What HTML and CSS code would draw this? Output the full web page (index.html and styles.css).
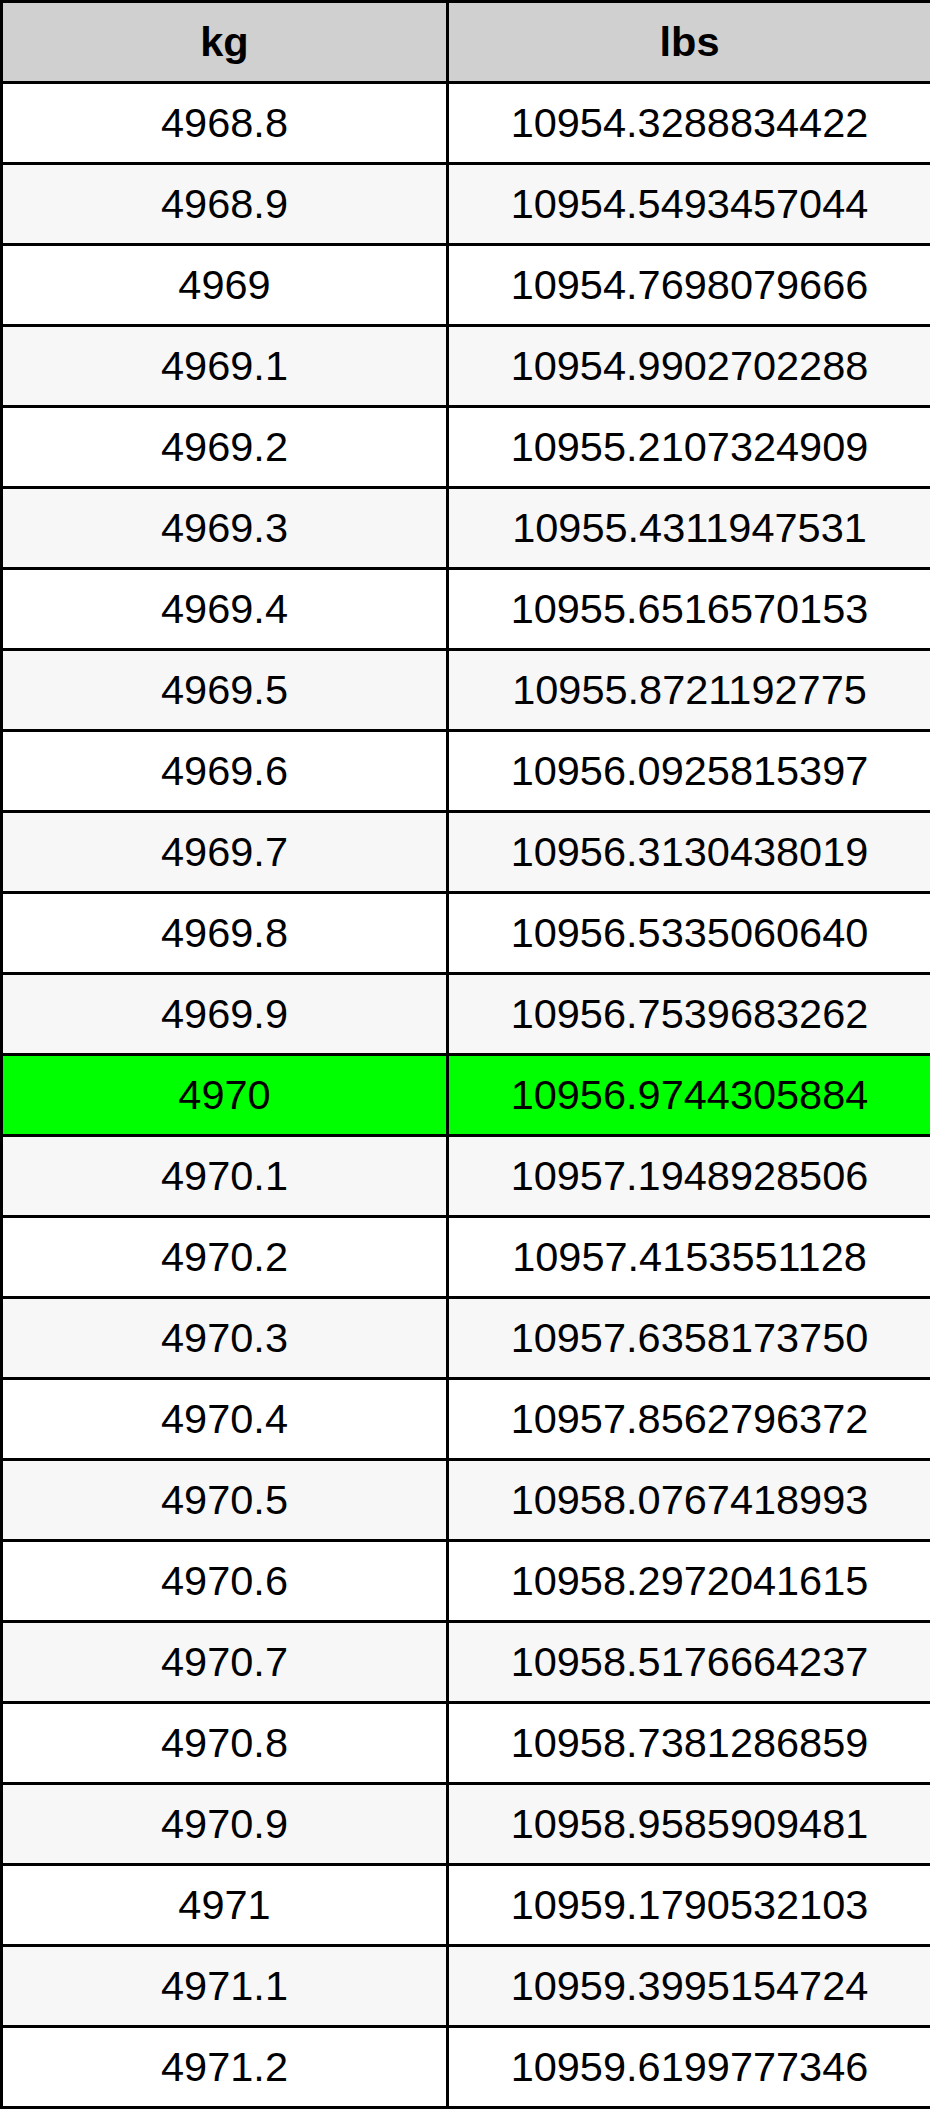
FILE: index.html
```html
<!DOCTYPE html>
<html>
<head>
<meta charset="utf-8">
<title>kg to lbs</title>
<link rel="stylesheet" href="styles.css">
</head>
<body>
<table class="conv">
<colgroup><col class="c1"><col class="c2"></colgroup>
<thead>
<tr><th>kg</th><th>lbs</th></tr>
</thead>
<tbody>
<tr><td>4968.8</td><td>10954.3288834422</td></tr>
<tr><td>4968.9</td><td>10954.5493457044</td></tr>
<tr><td>4969</td><td>10954.7698079666</td></tr>
<tr><td>4969.1</td><td>10954.9902702288</td></tr>
<tr><td>4969.2</td><td>10955.2107324909</td></tr>
<tr><td>4969.3</td><td>10955.4311947531</td></tr>
<tr><td>4969.4</td><td>10955.6516570153</td></tr>
<tr><td>4969.5</td><td>10955.8721192775</td></tr>
<tr><td>4969.6</td><td>10956.0925815397</td></tr>
<tr><td>4969.7</td><td>10956.3130438019</td></tr>
<tr><td>4969.8</td><td>10956.5335060640</td></tr>
<tr><td>4969.9</td><td>10956.7539683262</td></tr>
<tr class="hl"><td>4970</td><td>10956.9744305884</td></tr>
<tr><td>4970.1</td><td>10957.1948928506</td></tr>
<tr><td>4970.2</td><td>10957.4153551128</td></tr>
<tr><td>4970.3</td><td>10957.6358173750</td></tr>
<tr><td>4970.4</td><td>10957.8562796372</td></tr>
<tr><td>4970.5</td><td>10958.0767418993</td></tr>
<tr><td>4970.6</td><td>10958.2972041615</td></tr>
<tr><td>4970.7</td><td>10958.5176664237</td></tr>
<tr><td>4970.8</td><td>10958.7381286859</td></tr>
<tr><td>4970.9</td><td>10958.9585909481</td></tr>
<tr><td>4971</td><td>10959.1790532103</td></tr>
<tr><td>4971.1</td><td>10959.3995154724</td></tr>
<tr><td>4971.2</td><td>10959.6199777346</td></tr>
</tbody>
</table>
</body>
</html>
```
FILE: styles.css
```css
html, body {
  margin: 0;
  padding: 0;
  background: #ffffff;
}
.conv {
  border-collapse: collapse;
  table-layout: fixed;
  width: 930px;
  font-family: "Liberation Sans", Arial, sans-serif;
  font-size: 41.5px;
  color: #000;
}
.conv .c1 { width: 446px; }
.conv .c2 { width: 484px; }
.conv th, .conv td {
  border: 3px solid #000;
  height: 78px;
  padding: 0;
  text-align: center;
  vertical-align: middle;
  line-height: 1;
}
.conv th {
  background: #d0d0d0;
  font-weight: bold;
}
.conv tbody tr:nth-child(even) td {
  background: #f7f7f7;
}
.conv tbody tr.hl td {
  background: #00ff00;
}
```
